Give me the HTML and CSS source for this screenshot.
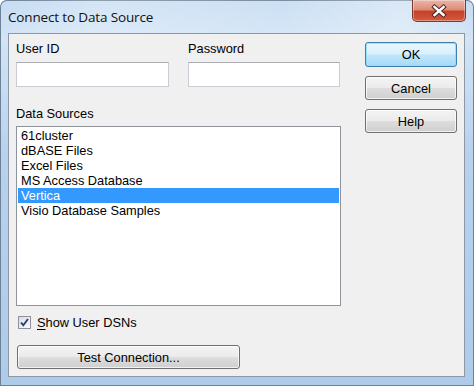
FILE: index.html
```html
<!DOCTYPE html>
<html>
<head>
<meta charset="utf-8">
<link rel="stylesheet" href="styles.css">
</head>
<body>
<div class="window">
  <div class="titlebar">
    <span class="title">Connect to Data Source</span>
    <div class="close">
      <svg width="20" height="14" viewBox="0 0 20 14">
        <path d="M5.5 3 L14.5 11 M14.5 3 L5.5 11" stroke="#4a2a26" stroke-width="4.4" stroke-linecap="square" fill="none"/>
        <path d="M5.5 3 L14.5 11 M14.5 3 L5.5 11" stroke="#ffffff" stroke-width="2.4" stroke-linecap="square" fill="none"/>
      </svg>
    </div>
  </div>
  <div class="client">
    <div class="leftcol">
      <div class="fields">
        <div class="field user">
          <label class="lbl">User ID</label>
          <div class="textbox"></div>
        </div>
        <div class="field pass">
          <label class="lbl">Password</label>
          <div class="textbox"></div>
        </div>
      </div>
      <label class="lbl ds-label">Data Sources</label>
      <div class="listbox">
        <div class="item">61cluster</div>
        <div class="item">dBASE Files</div>
        <div class="item">Excel Files</div>
        <div class="item">MS Access Database</div>
        <div class="item selected">Vertica</div>
        <div class="item">Visio Database Samples</div>
      </div>
      <div class="checkrow">
        <span class="checkbox">
          <svg width="13" height="13" viewBox="0 0 13 13">
            <path d="M3 6.5 L5.3 9.2 L10 3" stroke="#2a3f7a" stroke-width="1.9" fill="none"/>
          </svg>
        </span>
        <span class="checklabel"><u>S</u>how User DSNs</span>
      </div>
      <div class="btn test">Test Connection...</div>
    </div>
    <div class="rightcol">
      <div class="btn default">OK</div>
      <div class="btn">Cancel</div>
      <div class="btn">Help</div>
    </div>
  </div>
</div>
</body>
</html>
```
FILE: styles.css
```css
html, body {
  margin: 0;
  padding: 0;
}
body {
  width: 474px;
  height: 386px;
  overflow: hidden;
  font-family: "Liberation Sans", Arial, sans-serif;
  font-size: 12.8px;
  color: #000;
}
.window {
  box-sizing: border-box;
  width: 474px;
  height: 386px;
  background: linear-gradient(180deg, #c6dcf2 0%, #d2e4f6 10%, #b8d2ed 40%, #aecbea 100%);
  border-radius: 7px 7px 0 0;
  box-shadow: inset 0 0 0 1px #6d8197;
  display: flex;
  flex-direction: column;
}
.titlebar {
  height: 33px;
  display: flex;
  align-items: flex-start;
  justify-content: space-between;
  background: linear-gradient(90deg, rgba(255,255,255,0) 0%, rgba(255,255,255,0.25) 20%, rgba(255,255,255,0.1) 60%, rgba(255,255,255,0.35) 85%, rgba(255,255,255,0) 100%);
}
.title {
  font-family: "Open Sans", "Noto Sans", sans-serif;
  font-size: 13.5px;
  color: #111;
  margin: 7px 0 0 8px;
  line-height: 20px;
  letter-spacing: -0.15px;
}
.close {
  width: 52px;
  height: 21px;
  margin-right: 8px;
  border: 1px solid #7a3a30;
  border-top: none;
  border-radius: 0 0 5px 5px;
  background: linear-gradient(180deg, #eab6a8 0%, #de8c78 45%, #c6402a 55%, #d45a3c 100%);
  display: flex;
  align-items: center;
  justify-content: center;
  box-shadow: inset 0 0 0 1px rgba(255,255,255,0.35);
}
.client {
  box-sizing: border-box;
  margin: 0 9px 0 8px;
  height: 344px;
  border: 1px solid #8d98a6;
  background: #f0f0f0;
  display: flex;
  padding: 7px 7px 0 7px;
  gap: 24px;
}
.leftcol {
  width: 325px;
  display: flex;
  flex-direction: column;
}
.fields {
  display: flex;
  gap: 19px;
}
.field {
  display: flex;
  flex-direction: column;
}
.field.user { width: 153px; }
.field.pass { width: 152px; }
.lbl {
  display: block;
  line-height: 15px;
  height: 15px;
}
.textbox {
  box-sizing: border-box;
  margin-top: 6px;
  height: 25px;
  background: #fff;
  border: 1px solid #c9ccd2;
  border-top-color: #abadb3;
}
.ds-label {
  margin-top: 19px;
}
.listbox {
  box-sizing: border-box;
  margin-top: 5px;
  height: 180px;
  background: #fff;
  border: 1px solid #8f939a;
  padding: 1px 1px;
}
.item {
  height: 15px;
  line-height: 15px;
  padding-left: 3px;
  white-space: nowrap;
}
.item.selected {
  background: #3399ff;
  color: #fff;
}
.checkrow {
  margin-top: 8px;
  height: 16px;
  display: flex;
  align-items: center;
  gap: 6px;
  padding-left: 2px;
}
.checkbox {
  box-sizing: border-box;
  width: 13px;
  height: 13px;
  border: 1px solid #8e8f9f;
  background: linear-gradient(135deg, #d8dce4, #fbfbfb);
  display: flex;
  align-items: center;
  justify-content: center;
}
.checkbox svg {
  margin: -1px;
}
.checklabel {
  line-height: 15px;
}
.checklabel u {
  text-decoration-thickness: 1px;
  text-underline-offset: 2px;
}
.btn {
  box-sizing: border-box;
  height: 24px;
  display: flex;
  align-items: center;
  justify-content: center;
  border: 1px solid #707070;
  border-radius: 3px;
  background: linear-gradient(180deg, #f4f4f4 0%, #ebebeb 48%, #dddddd 52%, #cfcfcf 100%);
  box-shadow: inset 0 0 0 1px rgba(255,255,255,0.7);
}
.btn.test {
  margin-top: 15px;
  margin-left: 1px;
  width: 223px;
  height: 24px;
}
.rightcol {
  width: 92px;
  display: flex;
  flex-direction: column;
  gap: 9px;
  padding-top: 1px;
}
.rightcol .btn {
  height: 24px;
}
.btn.default {
  height: 25px;
  border-color: #3c7fb1;
  background: linear-gradient(180deg, #eaf6fd 0%, #d9f0fc 48%, #bee6fd 52%, #a7d9f5 100%);
  box-shadow: inset 0 0 0 1px rgba(140,220,250,0.8);
}
```
